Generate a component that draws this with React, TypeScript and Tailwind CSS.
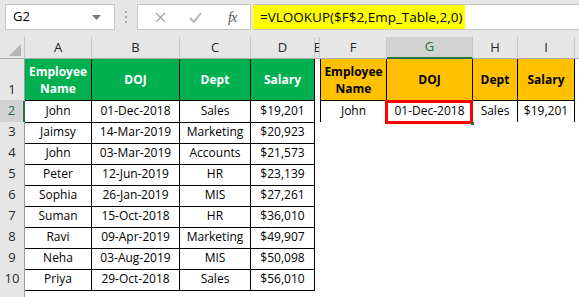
import React from 'react'

const cols = 'grid grid-cols-[25px_67px_88px_71px_64px_5px_67px_86px_45px_57px_1fr]'

const employees = [
  ['John', '01-Dec-2018', 'Sales', '$19,201'],
  ['Jaimsy', '14-Mar-2019', 'Marketing', '$20,923'],
  ['John', '03-Mar-2019', 'Accounts', '$21,573'],
  ['Peter', '12-Jun-2019', 'HR', '$23,139'],
  ['Sophia', '26-Jan-2019', 'MIS', '$27,261'],
  ['Suman', '15-Oct-2018', 'HR', '$36,010'],
  ['Ravi', '09-Apr-2019', 'Marketing', '$49,907'],
  ['Neha', '03-Aug-2019', 'MIS', '$50,098'],
  ['Priya', '29-Oct-2018', 'Sales', '$56,010'],
]

const letters = ['A', 'B', 'C', 'D', 'E', 'F', 'G', 'H', 'I']

const RowHead = ({ n, selected }: { n?: number; selected?: boolean }) => (
  <div
    className={
      selected
        ? 'flex items-end justify-center pb-[1px] bg-[#d2d2d2] text-[#217346] border-r-2 border-r-[#217346] border-b border-b-[#c8c8c8] text-[13px]'
        : 'flex items-end justify-center pb-[1px] bg-[#e6e6e6] text-[#262626] border-r border-r-[#9b9b9b] border-b border-b-[#d0d0d0] text-[13px]'
    }
  >
    {n}
  </div>
)

const Data = ({ children, left }: { children?: React.ReactNode; left?: boolean }) => (
  <div
    className={
      'flex items-center justify-center border-r border-b border-black text-[12px] text-black whitespace-nowrap ' +
      (left ? 'border-l' : '')
    }
  >
    {children}
  </div>
)

const Blank = () => <div className="bg-white" />

const FormulaBar = () => (
  <div className="h-[37px] bg-[#e6e6e6] flex items-start pt-[4px] pl-[5px]">
    {/* name box */}
    <div className="w-[110px] h-[26px] bg-white border border-[#c6c6c6] flex items-center justify-between pl-[7px] pr-[13px]">
      <span className="text-[13px] text-black">G2</span>
      <svg width="9" height="5" viewBox="0 0 9 5">
        <path d="M0 0 L9 0 L4.5 5 Z" fill="#7a7a7a" />
      </svg>
    </div>
    <div className="w-[22px] h-[26px] flex flex-col items-center justify-center gap-[3px]">
      <span className="w-[2px] h-[2px] bg-[#a6a6a6]" />
      <span className="w-[2px] h-[2px] bg-[#a6a6a6]" />
      <span className="w-[2px] h-[2px] bg-[#a6a6a6]" />
    </div>
    {/* buttons */}
    <div className="w-[114px] h-[26px] bg-white border border-[#c6c6c6] flex items-center">
      <svg className="ml-[17px]" width="11" height="11" viewBox="0 0 11 11">
        <path d="M1 1 L10 10 M10 1 L1 10" stroke="#a6a6a6" strokeWidth="1.3" />
      </svg>
      <svg className="ml-[23px]" width="13" height="11" viewBox="0 0 13 11">
        <path d="M1 6 L5 10 L12 1" stroke="#b4b4b4" strokeWidth="2" fill="none" />
      </svg>
      <span className="ml-[26px] text-[14px] italic text-[#505050] font-['Liberation_Serif',serif] tracking-[-1px]">fx</span>
    </div>
    {/* formula */}
    <div className="flex-1 ml-[2px] h-[26px] bg-white border-y border-[#c6c6c6] flex items-stretch">
      <div className="bg-[#ffff00] flex items-center pl-[7px] pr-[3px] text-[13.5px] text-black">
        =VLOOKUP($F$2,Emp_Table,2,0)
      </div>
    </div>
  </div>
)

const ColumnHeads = () => (
  <div className={cols + ' h-[22px] bg-[#e6e6e6] border-b border-[#ababab] text-[13px] text-[#262626]'}>
    <div className="relative border-r border-[#c6c6c6]">
      <svg className="absolute right-[3px] bottom-[3px]" width="12" height="12" viewBox="0 0 12 12">
        <path d="M12 0 L12 12 L0 12 Z" fill="#b4b4b4" />
      </svg>
    </div>
    {letters.map((l) =>
      l === 'G' ? (
        <div key={l} className="flex items-center justify-center bg-[#d2d2d2] text-[#217346] border-r border-[#c6c6c6] border-b-2 border-b-[#217346]">
          {l}
        </div>
      ) : (
        <div key={l} className="flex items-center justify-center border-r border-[#c6c6c6] overflow-hidden">
          {l}
        </div>
      )
    )}
    <div />
  </div>
)

export default function App() {
  return (
    <div className="w-[579px] h-[297px] overflow-hidden bg-white font-['Open_Sans',sans-serif]">
      <FormulaBar />
      <ColumnHeads />

      {/* row 1: headers */}
      <div className={cols + ' h-[42px]'}>
        <RowHead n={1} />
        {['Employee Name', 'DOJ', 'Dept', 'Salary'].map((h) => (
          <div key={h} className="flex items-center justify-center text-center bg-[#00b050] text-white font-bold text-[12px] leading-[17px] border-r border-b border-black px-[4px]">
            {h}
          </div>
        ))}
        <Blank />
        {['Employee Name', 'DOJ', 'Dept', 'Salary'].map((h, i) => (
          <div
            key={h}
            className={
              'flex items-center justify-center text-center bg-[#ffc000] text-black font-bold text-[12px] leading-[17px] border-r border-b border-black px-[2px] ' +
              (i === 0 ? 'border-l' : '')
            }
          >
            {h}
          </div>
        ))}
        <Blank />
      </div>

      {employees.map((e, idx) => (
        <div key={idx} className={cols + ' h-[21px]'}>
          <RowHead n={idx + 2} selected={idx === 0} />
          {e.map((v, j) => (
            <Data key={j}>{v}</Data>
          ))}
          <Blank />
          {idx === 0 ? (
            <>
              <Data left>John</Data>
              <div className="relative flex items-center justify-center border-r border-b border-black text-[12px] text-black whitespace-nowrap">
                01-Dec-2018
                <div className="absolute -left-[2px] -top-[1px] -right-[1px] -bottom-[2px] border-[3px] border-[#ff0000]" />
                <div className="absolute -right-[2px] -bottom-[3px] w-[3px] h-[3px] bg-[#217346]" />
              </div>
              <Data>Sales</Data>
              <Data>$19,201</Data>
            </>
          ) : (
            <>
              <Blank />
              <Blank />
              <Blank />
              <Blank />
            </>
          )}
          <Blank />
        </div>
      ))}

      {/* row 11, only its top edge is in view */}
      <div className={cols + ' h-[21px]'}>
        <RowHead />
      </div>
    </div>
  )
}
